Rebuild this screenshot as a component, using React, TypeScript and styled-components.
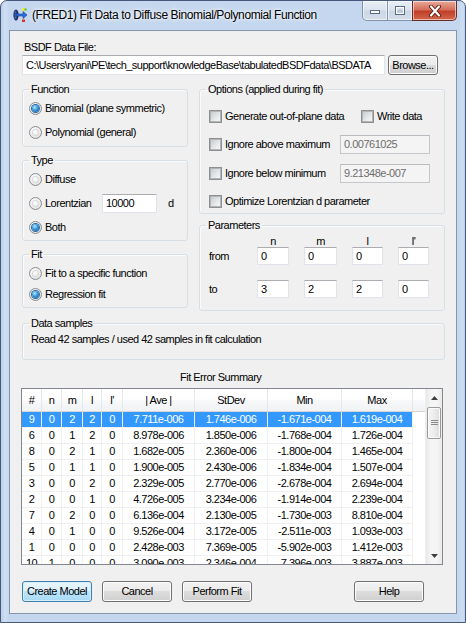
import React from "react";
import styled, { createGlobalStyle } from "styled-components";

const GlobalStyle = createGlobalStyle`
  html, body { margin: 0; padding: 0; background: #ffffff; }
  body {
    font-family: "Liberation Sans", Arial, sans-serif;
    font-size: 11px;
    letter-spacing: -0.5px;
    color: #000;
  }
  * { box-sizing: border-box; }
`;

const Window = styled.div`
  width: 466px;
  height: 623px;
  display: flex;
  flex-direction: column;
  border: 1px solid #46597a;
  border-radius: 7px 7px 0 0;
  background: linear-gradient(90deg, #b9cfe9 0px, #cfdff2 4px, #c4d7ee 8px, #c4d7ee 458px, #cfdff2 462px, #b9cfe9 100%);
  padding: 0 8px 8px 8px;
  overflow: hidden;
`;

const TitleBar = styled.div`
  height: 29px;
  display: flex;
  justify-content: space-between;
  align-items: flex-start;
  flex: none;
`;

const TitleLeft = styled.div`
  align-self: stretch;
  display: flex;
  align-items: center;
  gap: 4px;
  padding-left: 3px;
  padding-bottom: 1px;
`;

const TitleText = styled.span`
  font-family: "Liberation Sans", Arial, sans-serif;
  font-size: 12px;
  letter-spacing: -0.4px;
  color: #000;
  text-shadow: 0 0 6px #ffffff, 0 0 3px #ffffff;
`;

const CaptionGroup = styled.div`
  display: flex;
  height: 20px;
`;

const CaptionButton = styled.div<{ $w: number; $kind: "min" | "max" | "close" }>`
  width: ${(p) => p.$w}px;
  height: 20px;
  display: flex;
  align-items: center;
  justify-content: center;
  border: 1px solid ${(p) => (p.$kind === "close" ? "#6d2a22" : "#8393ab")};
  border-top: none;
  margin-left: ${(p) => (p.$kind === "min" ? 0 : -1)}px;
  border-radius: ${(p) => (p.$kind === "min" ? "0 0 0 5px" : p.$kind === "close" ? "0 0 5px 0" : "0")};
  background: ${(p) =>
    p.$kind === "close"
      ? "linear-gradient(180deg, #e9a99b 0%, #d4705c 45%, #c2402a 55%, #d0664a 100%)"
      : "linear-gradient(180deg, #e9eff7 0%, #dbe4ef 45%, #ccd8e6 55%, #d3dee9 100%)"};
  box-shadow: inset 0 0 0 1px rgba(255, 255, 255, 0.55);
`;

const Client = styled.div`
  flex: 1;
  background: #f0f0f0;
  border: 1px solid #8595ad;
  padding: 9px 11px 0 12px;
  display: flex;
  flex-direction: column;
`;

const FieldLabel = styled.div`
  line-height: 14px;
  height: 14px;
  padding-left: 2px;
`;

const FileRow = styled.div`
  margin-top: 1px;
  display: flex;
  align-items: center;
  gap: 3px;
`;

const Edit = styled.div<{ $w: number; $h?: number; $disabled?: boolean }>`
  width: ${(p) => p.$w}px;
  height: ${(p) => p.$h ?? 19}px;
  flex: none;
  background: ${(p) => (p.$disabled ? "#f4f4f4" : "#ffffff")};
  border: 1px solid ${(p) => (p.$disabled ? "#c4c8cc" : "#e2e3ea")};
  border-top-color: ${(p) => (p.$disabled ? "#b8bcc1" : "#abadb3")};
  color: ${(p) => (p.$disabled ? "#6d6d6d" : "#000")};
  padding-left: 3px;
  display: flex;
  align-items: center;
  white-space: nowrap;
  overflow: hidden;
  line-height: 13px;
`;

const Button = styled.div<{ $w: number; $h?: number; $default?: boolean; $ml?: number }>`
  width: ${(p) => p.$w}px;
  height: ${(p) => p.$h ?? 21}px;
  margin-left: ${(p) => p.$ml ?? 0}px;
  flex: none;
  display: flex;
  align-items: center;
  justify-content: center;
  border: 1px solid ${(p) => (p.$default ? "#3c7fb1" : "#707070")};
  border-radius: 3px;
  background: ${(p) =>
    p.$default
      ? "linear-gradient(180deg, #eaf6fd 0%, #d9f0fc 50%, #bee6fd 50%, #a7d9f5 100%)"
      : "linear-gradient(180deg, #f2f2f2 0%, #ebebeb 50%, #dddddd 50%, #cfcfcf 100%)"};
  box-shadow: inset 0 0 0 1px ${(p) => (p.$default ? "#d8eefa" : "#fcfcfc")};
  line-height: 13px;
`;

const MainGrid = styled.div`
  margin-top: 7px;
  display: grid;
  grid-template-columns: 166px 246px;
  column-gap: 11px;
  align-items: start;
`;

const Column = styled.div<{ $gap: number }>`
  display: flex;
  flex-direction: column;
  gap: ${(p) => p.$gap}px;
`;

const Group = styled.fieldset<{ $h: number; $mt?: number }>`
  margin: ${(p) => p.$mt ?? 0}px 0 0 0;
  padding: 0;
  min-width: 0;
  height: ${(p) => p.$h}px;
  border: 1px solid #d5dfe5;
  border-radius: 3px;
  box-shadow: inset 1px 1px 0 #fbfbfb;
`;

const Legend = styled.legend`
  padding: 0 2px;
  margin-left: 6px;
  line-height: 14px;
  font-size: 11px;
`;

const GroupBody = styled.div<{ $pt: number; $pl: number; $gap?: number }>`
  padding: ${(p) => p.$pt}px 0 0 ${(p) => p.$pl}px;
  display: flex;
  flex-direction: column;
  gap: ${(p) => p.$gap ?? 0}px;
`;

const Row = styled.div<{ $h?: number }>`
  height: ${(p) => p.$h ?? 20}px;
  display: flex;
  align-items: center;
`;

const Item = styled.div<{ $w?: number }>`
  display: flex;
  align-items: center;
  gap: 3px;
  width: ${(p) => (p.$w ? `${p.$w}px` : "auto")};
  flex: none;
  white-space: nowrap;
  line-height: 13px;
`;

const Radio = styled.span<{ $on?: boolean }>`
  width: 13px;
  height: 13px;
  flex: none;
  border-radius: 50%;
  border: 1px solid #8a8d90;
  background: radial-gradient(circle at 40% 35%, #ffffff 0%, #ececec 55%, #d2d2d2 100%);
  display: flex;
  align-items: center;
  justify-content: center;
  &::after {
    content: "";
    width: 7px;
    height: 7px;
    border-radius: 50%;
    background: ${(p) =>
      p.$on ? "radial-gradient(circle at 40% 35%, #b4ecff 0%, #3a96d8 45%, #0f4f8e 100%)" : "transparent"};
    box-shadow: ${(p) => (p.$on ? "0 0 0 1px #2a6aa3" : "inset 0 0 0 1px #d8d8d8")};
  }
`;

const Check = styled.span`
  width: 13px;
  height: 13px;
  flex: none;
  border: 1px solid #8e8f8f;
  background: #f5f5f5;
  display: flex;
  align-items: center;
  justify-content: center;
  &::after {
    content: "";
    width: 9px;
    height: 9px;
    border: 1px solid #b1b5ba;
    background: linear-gradient(135deg, #c8ccd1 0%, #e4e6e8 55%, #f7f7f7 100%);
  }
`;

const SuffixText = styled.span<{ $ml: number }>`
  margin-left: ${(p) => p.$ml}px;
  line-height: 13px;
`;

const ParamGrid = styled.div<{ $h: number; $mt?: number }>`
  display: grid;
  grid-template-columns: 33px 32px 33px 31px 31px;
  column-gap: 15px;
  height: ${(p) => p.$h}px;
  margin-top: ${(p) => p.$mt ?? 0}px;
  align-items: center;
  line-height: 12px;
`;

const ColHead = styled.span`
  text-align: center;
`;

const PlainText = styled.div<{ $pl?: number; $pt?: number }>`
  padding-left: ${(p) => p.$pl ?? 0}px;
  padding-top: ${(p) => p.$pt ?? 0}px;
  line-height: 14px;
  white-space: nowrap;
`;

const SummaryLabel = styled.div`
  margin-top: 10px;
  padding-left: 158px;
  line-height: 14px;
`;

const Table = styled.div`
  margin-top: 4px;
  margin-left: -1px;
  width: 422px;
  height: 177px;
  border: 1px solid #828790;
  background: #ffffff;
  display: flex;
  overflow: hidden;
`;

const ListArea = styled.div`
  flex: 1;
  overflow: hidden;
  display: flex;
  flex-direction: column;
`;

const cols = "20px 20px 21px 19px 21px 72px 73px 74px 71px 1fr";

const HeaderRow = styled.div`
  display: grid;
  grid-template-columns: ${cols};
  height: 23px;
  flex: none;
  background: linear-gradient(180deg, #ffffff 0%, #ffffff 45%, #f7f8fa 55%, #f1f2f4 100%);
  border-bottom: 1px solid #d5d5d5;
`;

const HeaderCell = styled.div`
  display: flex;
  align-items: center;
  justify-content: center;
  border-right: 1px solid #e3e8ee;
  padding-bottom: 1px;
`;

const DataRow = styled.div`
  display: grid;
  grid-template-columns: ${cols};
  height: 16px;
  flex: none;
`;

const Cell = styled.div<{ $sel?: boolean }>`
  display: flex;
  align-items: center;
  justify-content: center;
  border-right: 1px solid #f0f0f0;
  border-bottom: 1px solid #f0f0f0;
  background: ${(p) => (p.$sel ? "#3399ff" : "transparent")};
  color: ${(p) => (p.$sel ? "#ffffff" : "#000000")};
  white-space: nowrap;
  line-height: 13px;
`;

const Filler = styled.div``;

const ScrollBar = styled.div`
  width: 17px;
  flex: none;
  display: flex;
  flex-direction: column;
  background: linear-gradient(90deg, #e9e9e9 0%, #f5f5f5 30%, #f5f5f5 70%, #e9e9e9 100%);
  border-left: 1px solid #efefef;
`;

const ArrowBox = styled.div<{ $bottom?: boolean }>`
  height: 17px;
  flex: none;
  display: flex;
  align-items: center;
  justify-content: center;
  margin-top: ${(p) => (p.$bottom ? "auto" : "0")};
`;

const Thumb = styled.div`
  margin: 1px 1px 0 1px;
  height: 32px;
  flex: none;
  border: 1px solid #9b9b9b;
  border-radius: 2px;
  background: linear-gradient(90deg, #f6f6f6 0%, #ececec 50%, #dcdcdc 100%);
  box-shadow: inset 0 0 0 1px #fbfbfb;
  display: flex;
  align-items: center;
  justify-content: center;
`;

const ButtonRow = styled.div`
  margin-top: 16px;
  display: flex;
  gap: 10px;
`;

const data: string[][] = [
  ["9", "0", "2", "2", "0", "7.711e-006", "1.746e-006", "-1.671e-004", "1.619e-004"],
  ["6", "0", "1", "2", "0", "8.978e-006", "1.850e-006", "-1.768e-004", "1.726e-004"],
  ["8", "0", "2", "1", "0", "1.682e-005", "2.360e-006", "-1.800e-004", "1.465e-004"],
  ["5", "0", "1", "1", "0", "1.900e-005", "2.430e-006", "-1.834e-004", "1.507e-004"],
  ["3", "0", "0", "2", "0", "2.329e-005", "2.770e-006", "-2.678e-004", "2.694e-004"],
  ["2", "0", "0", "1", "0", "4.726e-005", "3.234e-006", "-1.914e-004", "2.239e-004"],
  ["7", "0", "2", "0", "0", "6.136e-004", "2.130e-005", "-1.730e-003", "8.810e-004"],
  ["4", "0", "1", "0", "0", "9.526e-004", "3.172e-005", "-2.511e-003", "1.093e-003"],
  ["1", "0", "0", "0", "0", "2.428e-003", "7.369e-005", "-5.902e-003", "1.412e-003"],
  ["10", "1", "0", "0", "0", "3.090e-003", "2.346e-004", "-7.396e-003", "3.887e-003"],
];

const headers = ["#", "n", "m", "l", "l'", "| Ave |", "StDev", "Min", "Max"];

const AppIcon = () => (
  <svg width="16" height="16" viewBox="0 0 16 16">
    <ellipse cx="4" cy="8" rx="2.6" ry="5.5" fill="#1d2a52" />
    <rect x="2.5" y="4" width="2" height="8" fill="#3b5fb0" />
    <path d="M4 7 H11 V4.5 L15 8 L11 11.5 V9 H4 Z" fill="#2a6fe0" stroke="#173f91" strokeWidth="0.6" />
    <rect x="10" y="1" width="3" height="3" fill="#f2e640" />
    <rect x="12.5" y="1.5" width="2" height="2" fill="#3cc24a" />
    <rect x="10" y="12.5" width="3" height="2.5" fill="#e0302a" />
  </svg>
);

const MinGlyph = () => (
  <svg width="12" height="8" viewBox="0 0 12 8">
    <rect x="1.5" y="3.5" width="9" height="3" fill="#ffffff" stroke="#5a6a82" strokeWidth="1" />
  </svg>
);

const MaxGlyph = () => (
  <svg width="12" height="10" viewBox="0 0 12 10">
    <rect x="1.5" y="0.5" width="9" height="8" fill="none" stroke="#5a6a82" strokeWidth="1" />
    <rect x="2.5" y="1.5" width="7" height="6" fill="none" stroke="#ffffff" strokeWidth="1" />
    <rect x="3.5" y="3.5" width="5" height="3" fill="#b9c7da" />
  </svg>
);

const CloseGlyph = () => (
  <svg width="14" height="12" viewBox="0 0 14 12">
    <path d="M3 1.5 L11 10.5 M11 1.5 L3 10.5" stroke="#5a1a12" strokeWidth="4" strokeLinecap="round" />
    <path d="M3 1.5 L11 10.5 M11 1.5 L3 10.5" stroke="#ffffff" strokeWidth="2.2" strokeLinecap="round" />
  </svg>
);

const UpArrow = () => (
  <svg width="7" height="4" viewBox="0 0 7 4">
    <path d="M0 4 L3.5 0 L7 4 Z" fill="#404040" />
  </svg>
);

const DownArrow = () => (
  <svg width="7" height="4" viewBox="0 0 7 4">
    <path d="M0 0 L3.5 4 L7 0 Z" fill="#404040" />
  </svg>
);

const Gripper = () => (
  <svg width="7" height="6" viewBox="0 0 7 6">
    <path d="M0 0.5 H7 M0 2.5 H7 M0 4.5 H7" stroke="#8a8a8a" strokeWidth="1" />
  </svg>
);

export default function App() {
  return (
    <>
      <GlobalStyle />
      <Window>
        <TitleBar>
          <TitleLeft>
            <AppIcon />
            <TitleText>(FRED1) Fit Data to Diffuse Binomial/Polynomial Function</TitleText>
          </TitleLeft>
          <CaptionGroup>
            <CaptionButton $w={26} $kind="min">
              <MinGlyph />
            </CaptionButton>
            <CaptionButton $w={26} $kind="max">
              <MaxGlyph />
            </CaptionButton>
            <CaptionButton $w={45} $kind="close">
              <CloseGlyph />
            </CaptionButton>
          </CaptionGroup>
        </TitleBar>
        <Client>
          <FieldLabel>BSDF Data File:</FieldLabel>
          <FileRow>
            <Edit $w={363} $h={20}>
              C:\Users\ryani\PE\tech_support\knowledgeBase\tabulatedBSDFdata\BSDATA
            </Edit>
            <Button $w={50} $h={20}>
              Browse...
            </Button>
          </FileRow>

          <MainGrid>
            <Column $gap={6}>
              <Group $h={65}>
                <Legend>Function</Legend>
                <GroupBody $pt={2} $pl={6} $gap={4}>
                  <Row>
                    <Item>
                      <Radio $on />
                      Binomial (plane symmetric)
                    </Item>
                  </Row>
                  <Row>
                    <Item>
                      <Radio />
                      Polynomial (general)
                    </Item>
                  </Row>
                </GroupBody>
              </Group>
              <Group $h={88}>
                <Legend>Type</Legend>
                <GroupBody $pt={2} $pl={6} $gap={4}>
                  <Row>
                    <Item>
                      <Radio />
                      Diffuse
                    </Item>
                  </Row>
                  <Row>
                    <Item $w={73}>
                      <Radio />
                      Lorentzian
                    </Item>
                    <Edit $w={55}>10000</Edit>
                    <SuffixText $ml={11}>d</SuffixText>
                  </Row>
                  <Row>
                    <Item>
                      <Radio $on />
                      Both
                    </Item>
                  </Row>
                </GroupBody>
              </Group>
              <Group $h={61}>
                <Legend>Fit</Legend>
                <GroupBody $pt={2} $pl={6} $gap={1}>
                  <Row>
                    <Item>
                      <Radio />
                      Fit to a specific function
                    </Item>
                  </Row>
                  <Row>
                    <Item>
                      <Radio $on />
                      Regression fit
                    </Item>
                  </Row>
                </GroupBody>
              </Group>
            </Column>

            <Column $gap={4}>
              <Group $h={132}>
                <Legend>Options (applied during fit)</Legend>
                <GroupBody $pt={10} $pl={9} $gap={8.5}>
                  <Row>
                    <Item $w={152}>
                      <Check />
                      Generate out-of-plane data
                    </Item>
                    <Item>
                      <Check />
                      Write data
                    </Item>
                  </Row>
                  <Row>
                    <Item $w={131}>
                      <Check />
                      Ignore above maximum
                    </Item>
                    <Edit $w={90} $disabled>
                      0.00761025
                    </Edit>
                  </Row>
                  <Row>
                    <Item $w={131}>
                      <Check />
                      Ignore below minimum
                    </Item>
                    <Edit $w={90} $disabled>
                      9.21348e-007
                    </Edit>
                  </Row>
                  <Row>
                    <Item>
                      <Check />
                      Optimize Lorentzian d parameter
                    </Item>
                  </Row>
                </GroupBody>
              </Group>
              <Group $h={93}>
                <Legend>Parameters</Legend>
                <GroupBody $pt={3} $pl={9}>
                  <ParamGrid $h={12}>
                    <span />
                    <ColHead>n</ColHead>
                    <ColHead>m</ColHead>
                    <ColHead>l</ColHead>
                    <ColHead>l'</ColHead>
                  </ParamGrid>
                  <ParamGrid $h={18}>
                    <span>from</span>
                    <Edit $w={32} $h={18}>0</Edit>
                    <Edit $w={33} $h={18}>0</Edit>
                    <Edit $w={31} $h={18}>0</Edit>
                    <Edit $w={31} $h={18}>0</Edit>
                  </ParamGrid>
                  <ParamGrid $h={18} $mt={15}>
                    <span>to</span>
                    <Edit $w={32} $h={18}>3</Edit>
                    <Edit $w={33} $h={18}>2</Edit>
                    <Edit $w={31} $h={18}>2</Edit>
                    <Edit $w={31} $h={18}>0</Edit>
                  </ParamGrid>
                </GroupBody>
              </Group>
            </Column>
          </MainGrid>

          <Group $h={44} $mt={5}>
            <Legend>Data samples</Legend>
            <PlainText $pl={8} $pt={2}>
              Read 42 samples / used 42 samples in fit calculation
            </PlainText>
          </Group>

          <SummaryLabel>Fit Error Summary</SummaryLabel>

          <Table>
            <ListArea>
              <HeaderRow>
                {headers.map((h) => (
                  <HeaderCell key={h}>{h}</HeaderCell>
                ))}
                <Filler />
              </HeaderRow>
              {data.map((r, i) => (
                <DataRow key={i}>
                  {r.map((v, j) => (
                    <Cell key={j} $sel={i === 0}>
                      {v}
                    </Cell>
                  ))}
                  <Filler />
                </DataRow>
              ))}
            </ListArea>
            <ScrollBar>
              <ArrowBox>
                <UpArrow />
              </ArrowBox>
              <Thumb>
                <Gripper />
              </Thumb>
              <ArrowBox $bottom>
                <DownArrow />
              </ArrowBox>
            </ScrollBar>
          </Table>

          <ButtonRow>
            <Button $w={70} $default>
              Create Model
            </Button>
            <Button $w={70}>Cancel</Button>
            <Button $w={70}>Perform Fit</Button>
            <Button $w={70} $ml={92}>
              Help
            </Button>
          </ButtonRow>
        </Client>
      </Window>
    </>
  );
}
